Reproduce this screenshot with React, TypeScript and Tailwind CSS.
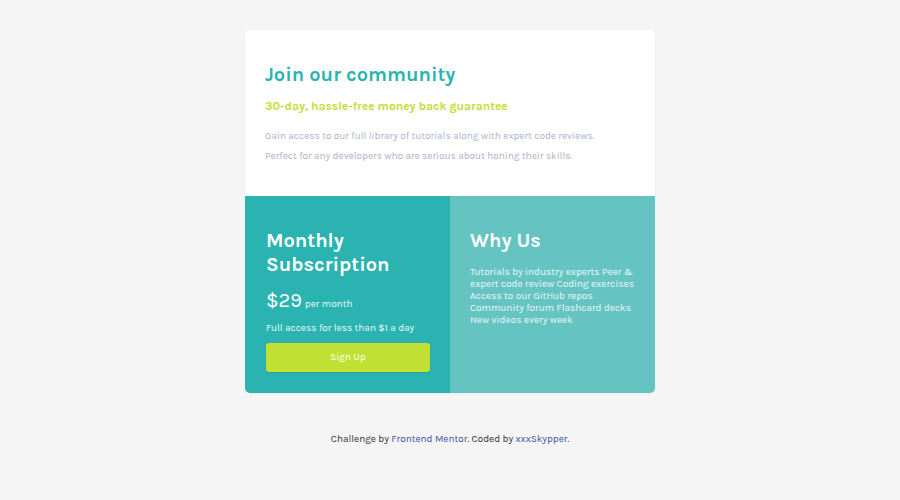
import React from "react";

const font = { fontFamily: '"Karla", "Noto Sans", "Liberation Sans", sans-serif' };

export default function App() {
  return (
    <div className="min-h-screen w-full bg-[#f5f5f5] flex flex-col items-center pt-[30px]" style={font}>
      <main className="w-[410px] rounded-[5px] overflow-hidden shadow-[0_1px_3px_rgba(0,0,0,0.04)]">
        <section className="bg-white px-5 pt-[33px] pb-[33px]">
          <h1 className="text-[20px] font-bold leading-6 text-[#2bb3b1]">Join our community</h1>
          <h2 className="mt-[11px] text-[12px] font-bold leading-4 text-[#c0df34]">30-day, hassle-free money back guarantee</h2>
          <p className="mt-[15px] text-[10px] leading-[14px] text-[#abb2c8]">
            Gain access to our full library of tutorials along with expert code reviews.
          </p>
          <p className="mt-[6px] text-[10px] leading-[14px] text-[#abb2c8]">
            Perfect for any developers who are serious about honing their skills.
          </p>
        </section>
        <div className="grid grid-cols-2 h-[197px]">
          <section className="bg-[#2bb3b1] pl-[21px] pr-5 pt-[33px] text-white">
            <h2 className="text-[20px] font-bold leading-6">Monthly Subscription</h2>
            <div className="mt-[12px] flex items-baseline gap-[3px]">
              <span className="text-[20px] leading-6">$29</span>
              <span className="text-[10px] text-white/90">per month</span>
            </div>
            <p className="mt-[8px] text-[10px] leading-[14px] text-white/90">Full access for less than $1 a day</p>
            <button className="mt-[8px] w-[164px] h-[29px] rounded-[3px] bg-[#c0e134] text-[10px] text-white shadow-[0_1px_2px_rgba(0,0,0,0.1)]">
              Sign Up
            </button>
          </section>
          <section className="bg-[#65c4c2] pl-[20px] pr-4 pt-[33px] text-white">
            <h2 className="text-[20px] font-bold leading-6">Why Us</h2>
            <p className="mt-[13px] text-[10px] leading-[12px] text-white/85">
              Tutorials by industry experts Peer &amp; expert code review Coding exercises Access to our GitHub repos
              Community forum Flashcard decks New videos every week
            </p>
          </section>
        </div>
      </main>
      <footer className="mt-[39px] text-[10px] text-[#333]">
        Challenge by <a className="text-[#3e52a3]">Frontend Mentor</a>. Coded by <a className="text-[#3e52a3]">xxxSkypper</a>.
      </footer>
    </div>
  );
}
